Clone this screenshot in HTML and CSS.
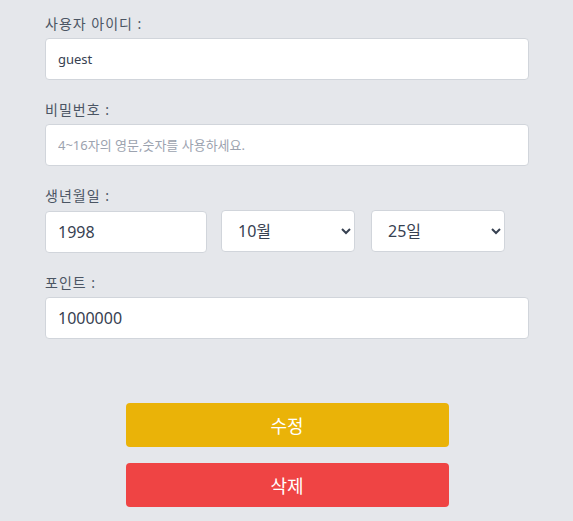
FILE: index.html
```html
<!DOCTYPE html>
<html lang="ko">
<head>
<meta charset="utf-8">
<title>회원 정보 수정</title>
<link rel="stylesheet" href="styles.css">
</head>
<body>
<form class="form">
  <div class="field">
    <label class="label">사용자 아이디 :</label>
    <input class="input input-sm" type="text" value="guest">
  </div>
  <div class="field">
    <label class="label">비밀번호 :</label>
    <input class="input input-sm" type="password" placeholder="4~16자의 영문,숫자를 사용하세요.">
  </div>
  <div class="field">
    <label class="label">생년월일 :</label>
    <div class="date-row">
      <input class="input year" type="text" value="1998">
      <select class="input select month">
        <option>10월</option>
      </select>
      <select class="input select day">
        <option>25일</option>
      </select>
    </div>
  </div>
  <div class="field">
    <label class="label">포인트 :</label>
    <input class="input" type="text" value="1000000">
  </div>
  <div class="actions">
    <button type="button" class="btn btn-edit">수정</button>
    <button type="button" class="btn btn-delete">삭제</button>
  </div>
</form>
</body>
</html>
```
FILE: styles.css
```css
html, body {
  margin: 0;
  padding: 0;
  background: #e5e7eb;
}
body {
  font-family: "Noto Sans", "Noto Sans CJK KR", sans-serif;
}
.form {
  padding: 14px 44px 0 45px;
}
.field {
  margin-bottom: 20px;
}
.label {
  display: block;
  font-size: 14px;
  line-height: 20px;
  letter-spacing: 1px;
  color: #4b5563;
  margin-bottom: 4px;
}
.input {
  box-sizing: border-box;
  display: block;
  width: 100%;
  height: 42px;
  margin: 0;
  padding: 0 12px;
  border: 1px solid #d1d5db;
  border-radius: 4px;
  background: #fff;
  color: #374151;
  font-family: "Noto Sans", "Noto Sans CJK KR", sans-serif;
  font-size: 16px;
  outline: none;
}
.input-sm {
  font-size: 13px;
}
.input::placeholder {
  color: #9ca3af;
}
.date-row {
  display: flex;
  align-items: flex-start;
  height: 43px;
}
.year {
  width: 162px;
  height: 42px;
  margin-top: 1px;
  margin-right: 14px;
}
.select {
  width: 134px;
  height: 42px;
  padding-left: 12px;
}
.month {
  margin-right: 16px;
}
.actions {
  display: flex;
  flex-direction: column;
  align-items: center;
  gap: 16px;
  padding-top: 44px;
}
.btn {
  width: 323px;
  height: 44px;
  border: none;
  border-radius: 4px;
  color: #fff;
  font-family: "Noto Sans", "Noto Sans CJK KR", sans-serif;
  font-size: 18px;
  cursor: pointer;
}
.btn-edit {
  background: #eab308;
}
.btn-delete {
  background: #ef4444;
}
```
